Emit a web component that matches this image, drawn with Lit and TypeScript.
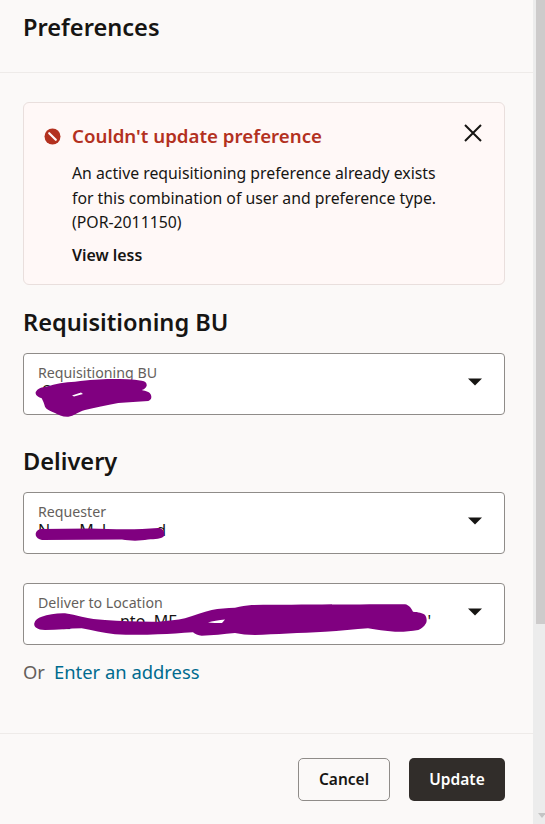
import { LitElement, html, css, svg } from "lit";
import { customElement } from "lit/decorators.js";

const caret = html`<svg class="caret" width="14" height="8" viewBox="0 0 14 8"><path d="M0 0.5H14L7 7.5Z" fill="#161513"/></svg>`;

@customElement("app-root")
export class AppRoot extends LitElement {
  static styles = css`
    :host {
      display: flex;
      width: 545px;
      height: 824px;
      overflow: hidden;
      background: #fbf9f8;
      color: #161513;
      font-family: "Noto Sans", "Open Sans", sans-serif;
    }
    .main { flex: 1; min-width: 0; display: flex; flex-direction: column; }
    header { height: 73px; box-sizing: border-box; padding: 12px 23px 0; border-bottom: 1px solid #eeebe9; }
    h1 { margin: 0; font-size: 23.6px; line-height: 30px; font-weight: 600; }
    .body { flex: 1; padding: 29px 28px 0 23px; display: flex; flex-direction: column; }
    .alert {
      box-sizing: border-box; height: 183px; position: relative;
      background: #fff8f7; border: 1px solid #e9dfdd; border-radius: 6px;
      padding: 19px 20px 0 20px;
      display: grid; grid-template-columns: 17px 1fr; column-gap: 11px; align-content: start;
    }
    .alert .icon { margin-top: 6px; display: block; }
    .alert h2 { margin: 0; font-size: 18.7px; line-height: 28px; font-weight: 600; color: #b3311f; }
    .alert p { grid-column: 2; margin: 11px 0 0; font-size: 15.8px; line-height: 24.5px; width: 370px; }
    .alert .less { grid-column: 2; margin-top: 9px; font-size: 15.9px; line-height: 22px; font-weight: 600; }
    .close { position: absolute; right: 14px; top: 13px; display: block; background: none; border: 0; padding: 8px; margin: 0; }
    .close svg { display: block; }
    h3 { margin: 0; font-size: 23.6px; line-height: 30px; font-weight: 600; }
    .h-bu { margin-top: 22px; }
    .h-del { margin-top: 31px; }
    .field {
      box-sizing: border-box; height: 62px; position: relative;
      background: #fff; border: 1px solid #8f8c89; border-radius: 4px;
      padding: 10px 14px 0;
    }
    .field label { display: block; font-size: 14.2px; line-height: 17px; color: #655f5c; }
    .value { font-size: 16px; line-height: 18px; margin-top: 1px; white-space: pre; }
    .field .caret { position: absolute; right: 22.5px; top: 24px; display: block; }
    .scribble { position: absolute; left: -1px; top: -1px; overflow: visible; }
    .f1 { margin-top: 16px; }
    .f2 { margin-top: 16px; }
    .f3 { margin-top: 29px; }
    .or { margin-top: 14px; font-size: 18.4px; line-height: 26px; color: #655f5c; display: flex; gap: 9px; }
    .or a { color: #006b8f; text-decoration: none; }
    footer {
      height: 91px; box-sizing: border-box; border-top: 1px solid #eeebe9;
      padding: 24px 28px 0 0; display: flex; justify-content: flex-end; gap: 19px; align-items: flex-start;
    }
    button.btn {
      height: 43px; box-sizing: border-box; border-radius: 5px; font: 600 15.5px/1 "Noto Sans", sans-serif; padding: 0;
    }
    .cancel { width: 92px; background: transparent; border: 1px solid #8f8c89; color: #161513; }
    .update { width: 96px; background: #312d2a; border: 0; color: #fff; }
    .scroll { width: 12px; background: #ececec; position: relative; display: flex; justify-content: flex-end; align-items: flex-start; overflow: hidden; }
    .thumb { width: 9px; height: 624px; background: #cdcbcb; }
    .down { position: absolute; bottom: 6px; left: 5px; display: block; }
  `;

  render() {
    return html`
      <div class="main">
        <header><h1>Preferences</h1></header>
        <div class="body">
          <div class="alert">
            <svg class="icon" width="17" height="17" viewBox="0 0 17 17">
              <circle cx="8.5" cy="8.5" r="8" fill="#b3311f"/>
              <path d="M5.2 5.2L11.8 11.8" stroke="#fff8f7" stroke-width="2.2" stroke-linecap="round"/>
            </svg>
            <h2>Couldn't update preference</h2>
            <p>An active requisitioning preference already exists for this combination of user and preference type. (POR-2011150)</p>
            <div class="less">View less</div>
            <button class="close" aria-label="Close">
              <svg width="18" height="18" viewBox="0 0 18 18"><path d="M1 1L17 17M17 1L1 17" stroke="#161513" stroke-width="2" fill="none"/></svg>
            </button>
          </div>
          <h3 class="h-bu">Requisitioning BU</h3>
          <div class="field f1">
            <label>Requisitioning BU</label>
            <div class="value"> S</div>
            ${caret}
            <svg class="scribble" width="482" height="62" viewBox="23 353 482 62">
              ${svg`<path fill-rule="evenodd" d="M35.7 392C38 388 42 387 46.7 386.7C55 384 65 382 75 381.7C90 380 100 379 111.7 379C122 379 133 379 141.7 380.7C145 381 147 383 146.7 385.7C146 388 144 389.5 141.7 390C146 391 150 392 151 395C152 398 151 400 148.3 401C138 402 128 402 118.3 403C106 405 95 408 85 410C78 412 74 416 68.3 416.7C63 417 58 415 55 413C50 411 46 409 45 406.7C44 403 43 401 41.7 398.3C38 397 35 395 35.7 392ZM72 395.5L81 392.5L83 394L74 396.5Z" fill="#800080"/>`}
            </svg>
          </div>
          <h3 class="h-del">Delivery</h3>
          <div class="field f2">
            <label>Requester</label>
            <div class="value">N       M  l            d</div>
            ${caret}
            <svg class="scribble" width="482" height="62" viewBox="23 492 482 62">
              ${svg`<path d="M40 529L90 528.5C110 529 135 530 158 528C163 528 165 532 164 536C162 539 155 539 148 539.5C140 541 130 541 122 539.5L42 540C35 539 33 532 40 529Z" fill="#800080"/>`}
            </svg>
          </div>
          <div class="field f3">
            <label>Deliver to Location</label>
            <div class="value">      _            nto  MF                                    g                      '</div>
            ${caret}
            <svg class="scribble" width="482" height="62" viewBox="23 583 482 62">
              ${svg`<path fill-rule="evenodd" d="M34.3 623.3C35 620 38 618 41.7 616.7C48 614.5 57 613 65 613.3C71 614 76 615.5 81.7 616.7C90 618.5 97 619.5 105 620C122 621 140 622 158.3 621.7C168 621 177 620 185 618.3C195 615 203 612 211.7 610C219 608.5 227 608 235 607.7C241 606 246 605.5 251.7 605C300 604.5 360 604.5 405 604.3C409 605 411 608 413 611.7C418 612 423 613 425 615C427 618 427 621 426 623.3C424 627 421 629 418.3 630C410 631.5 402 632 395 631.7C385 631 376 629.5 368 628.3C355 629 340 631 325 631.7C300 633 275 634 255 635C247 635 241 634 235 633C224 634 212 635.5 201.7 635.7C198 635.5 195 634 193 632.3C181 633 170 634 158 634.3C144 635 129 635 115 634.3C103 633 92 630 81.7 628.3C70 628.5 57 630 45 630C41 630 38 629 36.7 628C34.5 626.5 34 625 34.3 623.3ZM208 622.5C212 621 219 620 225 619.5L222 623C217 623 212 623 208 622.5Z" fill="#800080"/>`}
            </svg>
          </div>
          <div class="or"><span>Or</span><a href="#">Enter an address</a></div>
        </div>
        <footer>
          <button class="btn cancel">Cancel</button>
          <button class="btn update">Update</button>
        </footer>
      </div>
      <div class="scroll">
        <div class="thumb"></div>
        <svg class="down" width="8" height="5" viewBox="0 0 8 5"><path d="M0 0H8L4 5Z" fill="#c4c4c4"/></svg>
      </div>
    `;
  }
}
